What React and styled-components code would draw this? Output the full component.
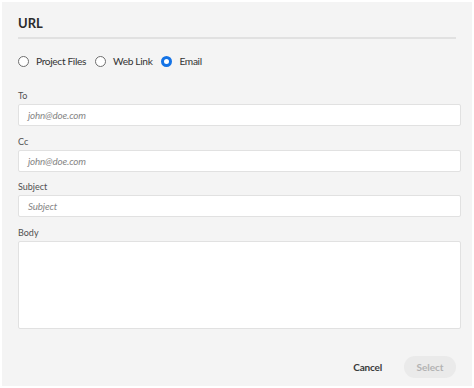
import React from "react";
import styled, { createGlobalStyle } from "styled-components";

const Global = createGlobalStyle`
  html, body { margin: 0; padding: 0; background: #ffffff; }
  body { font-family: Lato, "Noto Sans", sans-serif; }
`;

const Dialog = styled.div`
  box-sizing: border-box;
  margin: 2px 2px 0 2px;
  width: 470px;
  height: 384px;
  background: #f4f4f4;
  padding: 0 11px 0 16px;
  display: flex;
  flex-direction: column;
`;

const Title = styled.h2`
  margin: 0;
  padding-top: 13px;
  height: 22px;
  font-size: 13px;
  font-weight: 700;
  color: #2c2c2c;
  line-height: 16px;
`;

const Divider = styled.div`
  height: 2px;
  background: #e1e1e1;
  margin-right: 5px;
`;

const RadioRow = styled.div`
  display: flex;
  align-items: center;
  gap: 9px;
  margin-top: 15px;
  height: 14px;
`;

const RadioItem = styled.label`
  display: flex;
  align-items: center;
  gap: 7px;
  font-size: 10.2px;
  letter-spacing: -0.35px;
  color: #333;
`;

const Circle = styled.span`
  box-sizing: border-box;
  width: 11px;
  height: 11px;
  border-radius: 50%;
  border: ${(p) => (p.$on ? "3.5px solid #1473e6" : "1.5px solid #6e6e6e")};
  background: #fff;
`;

const Field = styled.div`
  display: flex;
  flex-direction: column;
  margin-top: ${(p) => p.$top}px;
`;

const Label = styled.span`
  font-size: 9px;
  color: #505050;
  height: 13px;
  line-height: 13px;
  margin-bottom: 2px;
`;

const Input = styled.div`
  box-sizing: border-box;
  height: 22px;
  background: #fff;
  border: 1px solid #e1e1e1;
  border-radius: 2px;
  padding-left: 9px;
  display: flex;
  align-items: center;
  font-size: 9.8px;
  letter-spacing: -0.15px;
  font-style: italic;
  color: #858585;
`;

const Area = styled(Input)`
  height: 88px;
`;

const Footer = styled.div`
  margin-top: auto;
  margin-bottom: 8px;
  margin-right: 5px;
  display: flex;
  justify-content: flex-end;
  align-items: center;
  gap: 22px;
`;

const TextButton = styled.span`
  font-size: 10px;
  font-weight: 700;
  letter-spacing: -0.2px;
  color: #3a3a3a;
`;

const Pill = styled.span`
  width: 52px;
  height: 22px;
  border-radius: 11px;
  background: #eaeaea;
  color: #b3b3b3;
  font-size: 10px;
  font-weight: 700;
  display: flex;
  align-items: center;
  justify-content: center;
`;

export default function App() {
  return (
    <>
      <Global />
      <Dialog>
        <Title>URL</Title>
        <Divider />
        <RadioRow>
          <RadioItem><Circle />Project Files</RadioItem>
          <RadioItem><Circle />Web Link</RadioItem>
          <RadioItem><Circle $on />Email</RadioItem>
        </RadioRow>
        <Field $top={21}>
          <Label>To</Label>
          <Input>john@doe.com</Input>
        </Field>
        <Field $top={9}>
          <Label>Cc</Label>
          <Input>john@doe.com</Input>
        </Field>
        <Field $top={8}>
          <Label>Subject</Label>
          <Input>Subject</Input>
        </Field>
        <Field $top={9}>
          <Label>Body</Label>
          <Area />
        </Field>
        <Footer>
          <TextButton>Cancel</TextButton>
          <Pill>Select</Pill>
        </Footer>
      </Dialog>
    </>
  );
}
